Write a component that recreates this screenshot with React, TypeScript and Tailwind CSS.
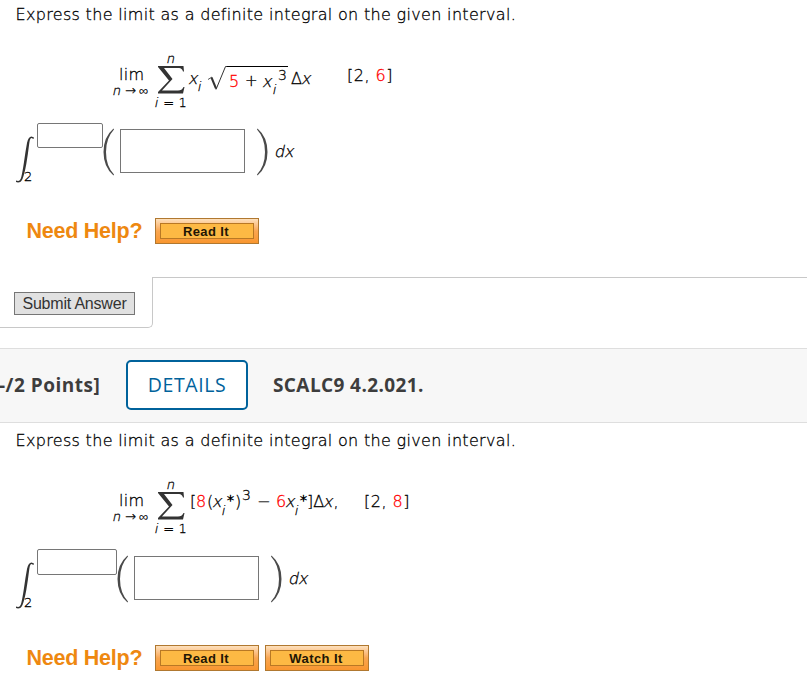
import React from 'react'

const Tok = ({ className, children }: { className: string, children: React.ReactNode }) => (
  <span className={`block shrink-0 whitespace-nowrap font-extralight leading-none [-webkit-text-stroke:0.3px] ${className}`}>{children}</span>
)

// slanted variable name
const It = ({ children }: { children: React.ReactNode }) => (
  <i className="inline-block -skew-x-12 not-italic">{children}</i>
)

const Prompt = () => (
  <p className="pl-[15.5px] text-[16px] font-extralight leading-none tracking-[0.32px] whitespace-nowrap [-webkit-text-stroke:0.3px]">
    Express the limit as a definite integral on the given interval.
  </p>
)

const Sigma = () => (
  <svg className="ml-[3px] mt-[1px] block" width="27" height="28" viewBox="0 0 27 28">
    <path d="M0 0H25.500L26 5.500H25Q24 2 21 2H6L14.500 13L4 24.500H20Q24 24.500 25.500 21H26.500L25 27.500H0V26L11 14.500L0 1Z" fill="#333" />
  </svg>
)

const LimitSum = () => (
  <>
    <div className="w-[43px] shrink-0">
      <Tok className="ml-[7px] mt-[17px] text-[16px] tracking-[0.3px]">lim</Tok>
      <div className="mt-px flex h-3 leading-none">
        <Tok className="ml-px w-[12px] text-[13px]"><It>n</It></Tok>
        <Tok className="w-[14px] text-[13px]">→</Tok>
        <Tok className="text-[13px] [-webkit-text-stroke:0px]">∞</Tok>
      </div>
    </div>
    <div className="w-[34px] shrink-0">
      <Tok className="ml-[12px] mt-[2px] text-[13px]"><It>n</It></Tok>
      <Sigma />
      <Tok className="mt-[2px] text-[13px] tracking-[0.2px]"><It>i</It> = 1</Tok>
    </div>
  </>
)

const Root = ({ children }: { children: React.ReactNode }) => (
  <div className="mt-[15px] flex w-[83px] shrink-0">
    <svg className="block shrink-0" width="19" height="27" viewBox="0 0 19 27">
      <path d="M0 14.500L4 12" fill="none" stroke="#555" strokeWidth="1" />
      <path d="M3.500 12.500L8 23.500" fill="none" stroke="#333" strokeWidth="2" />
      <path d="M8 24.500L17.500 1.500H19" fill="none" stroke="#333" strokeWidth="1" />
    </svg>
    <div className="mt-[1px] flex w-[61px] shrink-0 border-t border-black">{children}</div>
  </div>
)

const IntegralSign = () => (
  <svg className="mt-[16px] block shrink-0" width="19" height="47" viewBox="0 0 19 47">
    <path
      d="M18 1.500L17.500 3L15.500 2Q14 2 13.300 7Q12 18 10.300 28Q8.500 38 6.500 43Q5 46.500 2 46.500L0 46V44.500L2 45Q4.300 45 5.300 41Q6.500 36 8 26Q9.500 15 11 7Q12.300 .5 15.500 .5Z"
      fill="#333"
    />
  </svg>
)

const Paren = ({ right, className }: { right?: boolean, className: string }) => (
  <svg className={`block shrink-0 ${className}`} width="11" height="48" viewBox="0 0 11 48">
    <path
      d="M10.500 .5Q.5 9 .5 24T10.500 47.500L11 46.500Q3 38 3 24T11 1.500Z"
      fill="#4a4a4a"
      transform={right ? 'translate(11 0) scale(-1 1)' : undefined}
    />
  </svg>
)

const IntegralAnswer = ({ upper, shift }: { upper: string, shift: string }) => (
  <div className="flex h-[66px] pl-4">
    <IntegralSign />
    <Tok className="-ml-[11px] mt-[50px] w-[13px] text-[13px]">2</Tok>
    <div className={`mt-[3px] shrink-0 rounded-[2px] border border-[#767676] bg-white ${upper}`} />
    <div className={`flex shrink-0 ${shift}`}>
      <Paren className="mt-[8px]" />
      <div className="ml-[6px] mt-[9px] h-[44px] w-[125px] shrink-0 border border-[#767676] bg-white" />
      <Paren right className="ml-[12px] mt-[8px]" />
      <Tok className="ml-[7px] mt-[24px] text-[16px]"><It>dx</It></Tok>
    </div>
  </div>
)

const HelpButton = ({ children }: { children: React.ReactNode }) => (
  <button className="h-[26px] w-[104px] shrink-0 border border-[#b07830] bg-gradient-to-b from-[#fde0bc] via-[#f9a650] to-[#f9962e] p-1 font-['Liberation_Sans',sans-serif] text-[13px] font-bold text-[#211505]">
    <span className="flex h-4 items-center justify-center border border-[#b97824] bg-[#fdb944] pr-[2px] pt-px leading-none tracking-[0.4px]">{children}</span>
  </button>
)

const NeedHelp = ({ items }: { items: string[] }) => (
  <div className="flex h-[26px] pl-[26.5px]">
    <span className="w-[128.5px] shrink-0 whitespace-nowrap font-['Liberation_Sans',sans-serif] text-[21.500px] font-bold leading-[27px] tracking-[-0.25px] text-[#ee8810]">Need Help?</span>
    <div className="flex gap-[6px]">
      {items.map(item => <HelpButton key={item}>{item}</HelpButton>)}
    </div>
  </div>
)

const App: React.FC = () => {
  return (
    <div className="h-[693px] w-full overflow-hidden bg-white font-['DejaVu_Sans',sans-serif] text-black">
      <section className="pt-[7px]">
        <Prompt />
        <div className="mt-[27px] flex h-16 pl-[112px]">
          <LimitSum />
          <Tok className="mt-[21px] w-[9px] text-[16px]"><It>x</It></Tok>
          <Tok className="mt-[30px] w-[10px] text-[13px]"><It>i</It></Tok>
          <Root>
            <Tok className="ml-[2px] mt-[7px] w-[16px] text-[16px] text-[#ff0000]">5</Tok>
            <Tok className="mt-[7px] w-[18px] text-[15px]">+</Tok>
            <Tok className="mt-[7px] w-[10px] text-[16px]"><It>x</It></Tok>
            <Tok className="mt-[16px] w-[5px] text-[13px]"><It>i</It></Tok>
            <Tok className="mt-[1px] text-[14px]">3</Tok>
          </Root>
          <Tok className="mt-[21px] w-[56px] text-[16px] tracking-[-0.3px]">Δ<It>x</It></Tok>
          <Tok className="mt-[18px] text-[16px] tracking-[0.5px]">[2, <span className="text-[#ff0000]">6</span>]</Tok>
        </div>
        <div className="mt-[6px]">
          <IntegralAnswer upper="h-[25px] w-[66px]" shift="" />
        </div>
        <div className="mt-8">
          <NeedHelp items={['Read It']} />
        </div>
      </section>

      <div className="mt-[33px] flex h-[51px]">
        <div className="w-[153px] shrink-0 rounded-br-[5px] border-b border-r border-[#c8c8c8] pl-[14px] pt-[15px]">
          <button className="flex h-[23px] w-[121px] items-center justify-center whitespace-nowrap border border-[#767676] bg-[#e1e1e1] font-['Liberation_Sans',sans-serif] text-[16px] leading-none tracking-[-0.2px] text-[#333]">Submit Answer</button>
        </div>
        <div className="flex-1 border-t border-[#c8c8c8]" />
      </div>

      <header className="mt-5 flex h-[75px] items-center border-y border-[#dedede] bg-[#f7f7f7] font-['Open_Sans',sans-serif] text-[19px] font-bold tracking-[0.4px] text-[#3d3d3d]">
        <span className="-ml-px w-[127px] shrink-0 whitespace-nowrap tracking-[0.5px]">-/2 Points]</span>
        <button className="-mt-px h-[50px] w-[122px] shrink-0 rounded-[5px] border-2 border-[#00629b] bg-white text-[19.500px] font-normal tracking-[0.6px] text-[#00629b]">DETAILS</button>
        <span className="ml-[25px] whitespace-nowrap">SCALC9 4.2.021.</span>
      </header>

      <section className="pt-[10px]">
        <Prompt />
        <div className="mt-[27px] flex h-16 pl-[112px]">
          <LimitSum />
          <Tok className="ml-[1px] mt-[18px] w-[6px] text-[16px]">[</Tok>
          <Tok className="mt-[18px] w-[11px] text-[16px] text-[#ff0000]">8</Tok>
          <Tok className="mt-[18px] w-[15px] text-[16px] tracking-[-0.5px]">(<It>x</It></Tok>
          <Tok className="mt-[28px] w-[5px] text-[13px]"><It>i</It></Tok>
          <Tok className="mt-[17px] w-[8px] text-[14px] [-webkit-text-stroke:0.7px]">*</Tok>
          <Tok className="mt-[18px] w-[7px] text-[16px]">)</Tok>
          <Tok className="mt-[12px] w-[15px] text-[14px]">3</Tok>
          <Tok className="mt-[18px] w-[19px] text-[16px]">−</Tok>
          <Tok className="mt-[18px] w-[19px] text-[16px] tracking-[-0.5px]"><span className="text-[#ff0000]">6</span><It>x</It></Tok>
          <Tok className="mt-[28px] w-[5px] text-[13px]"><It>i</It></Tok>
          <Tok className="mt-[17px] w-[7px] text-[14px] [-webkit-text-stroke:0.7px]">*</Tok>
          <Tok className="mt-[18px] w-[57px] text-[16px] tracking-[-0.1px]">]Δ<It>x</It>,</Tok>
          <Tok className="mt-[18px] text-[16px] tracking-[0.5px]">[2, <span className="text-[#ff0000]">8</span>]</Tok>
        </div>
        <div className="mt-[6px]">
          <IntegralAnswer upper="h-[26px] w-[80px]" shift="pt-px" />
        </div>
        <div className="mt-[33px]">
          <NeedHelp items={['Read It', 'Watch It']} />
        </div>
      </section>
    </div>
  )
}

export default App
